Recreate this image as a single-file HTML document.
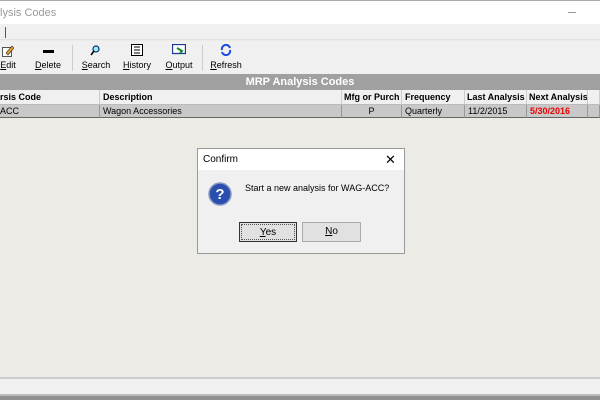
<!DOCTYPE html>
<html><head><style>
*{margin:0;padding:0;box-sizing:border-box}
body{width:600px;height:400px;overflow:hidden;background:#ecebe6;font-family:"Liberation Sans",sans-serif;font-size:9px;position:relative;color:#000}
.abs{position:absolute;white-space:nowrap}
.tb{left:0;top:0;width:600px;height:24px;background:#fff;border-top:1px solid #aaa}
.menu{left:0;top:24px;width:600px;height:16px;background:#f0f0f0;border-bottom:1px solid #e2e2e2}
.tool{left:0;top:41px;width:600px;height:33px;background:#f0f0f0}
.btn{position:absolute;top:0;text-align:center;font-size:9px}
.btn span{position:absolute;top:19px;left:0;width:100%}
.hdr{left:0;top:74px;width:600px;height:16px;background:#a0a0a0;color:#fff;font-weight:bold;font-size:11px;text-align:center;line-height:16px}
.ch{top:90px;height:15px;background:#f0f0f0;border-right:1px solid #ccc;border-bottom:1px solid #bbb;font-weight:bold;line-height:14px;padding-left:3px;font-size:9px;overflow:hidden}
.cr{top:105px;height:13px;background:#c8c8c8;border-right:1px solid #999;border-bottom:1px solid #666;line-height:12px;padding-left:3px;font-size:9px;overflow:hidden}
</style></head><body>
<div class="abs tb"><div class="abs" style="left:0;top:6px;font-size:11px;color:#999">lysis Codes</div>
<div class="abs" style="left:568px;top:11px;width:8px;height:1px;background:#999"></div></div>
<div class="abs menu"><div class="abs" style="left:5px;top:3px;width:1px;height:11px;background:#555"></div></div>
<div class="abs tool">
<div class="abs" style="left:72px;top:4px;width:1px;height:26px;background:#ccc"></div>
<div class="abs" style="left:202px;top:4px;width:1px;height:26px;background:#ccc"></div>
<div class="btn" style="left:0;width:16px"><svg class="abs" style="left:2px;top:4px" width="12" height="12"><rect x="0.5" y="2.5" width="9" height="9" fill="#fff" stroke="#555"/><path d="M4 8 L10 1 L12 3 L6 10Z" fill="#e8a020" stroke="#333" stroke-width=".6"/></svg><span><u>E</u>dit</span></div>
<div class="btn" style="left:32px;width:32px"><div class="abs" style="left:11px;top:9px;width:11px;height:3px;background:#000"></div><span><u>D</u>elete</span></div>
<div class="btn" style="left:80px;width:32px"><svg class="abs" style="left:10px;top:4px" width="10" height="11"><circle cx="6" cy="4" r="3" fill="#9ef" stroke="#036" stroke-width="1.2"/><path d="M4 6 L1 10" stroke="#000" stroke-width="1.6"/></svg><span><u>S</u>earch</span></div>
<div class="btn" style="left:120px;width:34px"><svg class="abs" style="left:11px;top:3px" width="12" height="12"><rect x=".5" y=".5" width="11" height="11" fill="#fff" stroke="#000"/><path d="M3 3h6M3 6h6M3 9h6" stroke="#000"/></svg><span><u>H</u>istory</span></div>
<div class="btn" style="left:163px;width:32px"><svg class="abs" style="left:9px;top:3px" width="14" height="12"><rect x=".5" y=".5" width="13" height="9" fill="#fff" stroke="#1a3a9a" stroke-width="1.3"/><path d="M5 4 L10 7 L8 9" stroke="#1a8a2a" stroke-width="2" fill="none"/></svg><span><u>O</u>utput</span></div>
<div class="btn" style="left:208px;width:36px"><svg class="abs" style="left:12px;top:3px" width="12" height="12"><path d="M2 6 A4 4 0 0 1 10 4 M10 6 A4 4 0 0 1 2 8" stroke="#1a4ae0" stroke-width="2" fill="none"/></svg><span><u>R</u>efresh</span></div>
</div>
<div class="abs hdr">MRP Analysis Codes</div>
<div class="abs ch" style="left:0;width:100px;padding-left:0">rsis Code</div>
<div class="abs ch" style="left:100px;width:242px">Description</div>
<div class="abs ch" style="left:342px;width:60px;padding-left:2px">Mfg or Purch</div>
<div class="abs ch" style="left:402px;width:63px">Frequency</div>
<div class="abs ch" style="left:465px;width:62px;padding-left:2px">Last Analysis</div>
<div class="abs ch" style="left:527px;width:61px;padding-left:2px">Next Analysis</div>
<div class="abs ch" style="left:588px;width:12px"></div>
<div class="abs cr" style="left:0;width:100px;padding-left:0">ACC</div>
<div class="abs cr" style="left:100px;width:242px">Wagon Accessories</div>
<div class="abs cr" style="left:342px;width:60px;text-align:center;padding:0">P</div>
<div class="abs cr" style="left:402px;width:63px">Quarterly</div>
<div class="abs cr" style="left:465px;width:62px">11/2/2015</div>
<div class="abs cr" style="left:527px;width:61px;color:#e00;font-weight:bold">5/30/2016</div>
<div class="abs cr" style="left:588px;width:12px"></div>
<div class="abs" style="left:197px;top:148px;width:208px;height:106px;background:#f0f0f0;border:1px solid #999">
<div class="abs" style="left:0;top:0;width:206px;height:21px;background:#fff;font-size:10px;line-height:21px;padding-left:5px">Confirm<span class="abs" style="left:187px;top:0;font-size:13px">✕</span></div>
<svg class="abs" style="left:10px;top:33px" width="24" height="24"><circle cx="12" cy="12" r="11" fill="#2a4fae" stroke="#8898c0" stroke-width="1.5"/><text x="12" y="17" text-anchor="middle" fill="#fff" font-weight="bold" font-size="15" font-family="Liberation Sans">?</text></svg>
<div class="abs" style="left:47px;top:34px;font-size:9px">Start a new analysis for WAG-ACC?</div>
<div class="abs" style="left:41px;top:73px;width:58px;height:20px;border:1px solid #333;background:#e1e1e1;text-align:center;line-height:16px;font-size:10px"><div style="margin:1px;border:1px dotted #555;height:16px"><u>Y</u>es</div></div>
<div class="abs" style="left:104px;top:73px;width:59px;height:20px;border:1px solid #aaa;background:#e1e1e1;text-align:center;line-height:18px;font-size:10px"><u>N</u>o</div>
</div>
<div class="abs" style="left:0;top:377px;width:600px;height:19px;background:#f0f0f0;border-top:2px solid #ccc;border-bottom:2px solid #bbb"></div>
<div class="abs" style="left:0;top:396px;width:600px;height:4px;background:#909090"></div>
</body></html>
